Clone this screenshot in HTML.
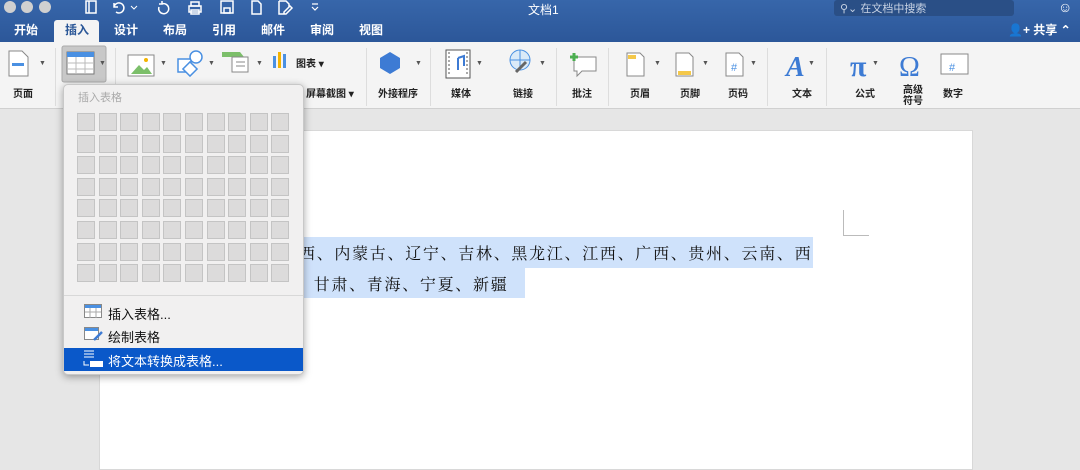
<!DOCTYPE html>
<html><head><meta charset="utf-8">
<style>
*{margin:0;padding:0;box-sizing:border-box}
body{width:1080px;height:464px;overflow:hidden;background:#e6e6e6;font-family:"Liberation Sans","Noto Sans CJK SC",sans-serif;position:relative}
.a{position:absolute}
#top{left:0;top:0;width:1080px;height:42px;background:linear-gradient(#3766aa,#2c5799)}
.tab{position:absolute;top:21px;font-size:12px;color:#fff;font-weight:bold}
#ribbon{left:0;top:42px;width:1080px;height:67px;background:#f4f4f4;border-bottom:1px solid #d0d0d0}
.lbl{position:absolute;font-size:10px;color:#222;text-align:center;font-weight:bold}
.sep{position:absolute;top:48px;width:1px;height:58px;background:#ddd}
.dd{position:absolute;font-size:7px;color:#555}
#page{left:99px;top:130px;width:874px;height:340px;background:#fff;border:1px solid #d8d8d8}
.sel{position:absolute;background:#cfe2fb}
.txt{position:absolute;font-family:"Liberation Serif","Noto Serif CJK SC",serif;font-size:16px;letter-spacing:1.7px;color:#111;white-space:nowrap}
#menu{left:63px;top:84px;width:241px;height:291px;background:#f1f0f0;border-radius:5px;box-shadow:0 2px 8px rgba(0,0,0,.35);border:1px solid #c8c8c8}
.cell{position:absolute;width:18px;height:18px;background:#dcdbdb;border:1px solid #c4c4c4}
.mi{position:absolute;left:44px;font-size:13px;color:#111}
.tl{position:absolute;top:1px;width:12px;height:12px;border-radius:50%;background:#d0d0d0}
</style></head><body>
<div id="top" class="a"></div>
<div class="tl" style="left:4px"></div><div class="tl" style="left:21px"></div><div class="tl" style="left:39px"></div>
<svg class="a" style="left:80px;top:0" width="250" height="16" fill="none" stroke="#fff" stroke-width="1.5">
<rect x="6" y="1" width="10" height="12"/><line x1="9" y1="1" x2="9" y2="13"/>
<path d="M34 7a5 5 0 1 1 2 5M34 3v4h4"/><path d="M51 6l3 3 3-3" stroke-width="1"/>
<path d="M82 4a5 5 0 1 1-3 3M82 1v3h-3"/>
<rect x="109" y="6" width="12" height="6"/><rect x="111" y="2" width="8" height="4"/><rect x="111" y="10" width="8" height="4"/>
<rect x="141" y="1" width="12" height="12"/><rect x="144" y="8" width="6" height="5"/>
<path d="M172 1h6l3 3v10h-9z"/>
<path d="M199 1h7l3 3v3M199 1v13h5M204 12l6-6 2 2-6 6h-2z"/>
<path d="M232 4h6M232 7l3 3 3-3" stroke-width="1.2"/>
</svg>
<div class="a" style="left:528px;top:1px;font-size:12px;color:#fff">文档1</div>
<div class="a" style="left:834px;top:0;width:180px;height:16px;background:#2a4f86;border-radius:3px"></div>
<div class="a" style="left:840px;top:0px;font-size:11px;color:#c8d3e4">⚲⌄ 在文档中搜索</div>
<div class="a" style="left:1058px;top:-1px;font-size:14px;color:#fff">☺</div>
<div class="tab" style="left:14px">开始</div>
<div class="a" style="left:54px;top:20px;width:45px;height:23px;background:#f4f4f4;border-radius:3px 3px 0 0"></div>
<div class="tab" style="left:65px;color:#2b5797">插入</div>
<div class="tab" style="left:114px">设计</div>
<div class="tab" style="left:163px">布局</div>
<div class="tab" style="left:212px">引用</div>
<div class="tab" style="left:261px">邮件</div>
<div class="tab" style="left:310px">审阅</div>
<div class="tab" style="left:359px">视图</div>
<div class="tab" style="left:1008px">👤+ 共享 ⌃</div>
<div id="ribbon" class="a"></div>
<div class="sep" style="left:55px"></div><div class="sep" style="left:115px"></div><div class="sep" style="left:366px"></div><div class="sep" style="left:430px"></div><div class="sep" style="left:556px"></div><div class="sep" style="left:608px"></div><div class="sep" style="left:767px"></div><div class="sep" style="left:826px"></div>
<svg class="a" style="left:0;top:44px" width="1000" height="40">
<path d="M9 7h13l6 6v19H9z" fill="#fff" stroke="#888"/><rect x="12" y="19" width="12" height="3" fill="#4a90e2"/>
<rect x="62" y="2" width="44" height="36" rx="2" fill="#c8c8c8" stroke="#aaa"/>
<rect x="67" y="8" width="27" height="22" fill="#fff" stroke="#777"/><rect x="67" y="8" width="27" height="5" fill="#4a90e2"/>
<path d="M67 19h27M67 25h27M76 13v17M85 13v17" stroke="#bbb"/>
<rect x="128" y="11" width="26" height="21" fill="#fff" stroke="#888"/><path d="M131 30l8-9 5 5 3-3 5 7z" fill="#7cbf6a"/><circle cx="146" cy="16" r="2" fill="#f4b400"/>
<rect x="178" y="15" width="13" height="13" fill="#fff" stroke="#4a90e2" stroke-width="1.5"/><circle cx="196" cy="13" r="6" fill="#fff" stroke="#4a90e2" stroke-width="1.5"/><rect x="185" y="20" width="10" height="10" transform="rotate(45 190 25)" fill="#fff" stroke="#4a90e2" stroke-width="1.5"/>
<path d="M222 8h18l4 5h-22z" fill="#7cbf6a"/><rect x="232" y="13" width="16" height="15" fill="#fff" stroke="#888"/><path d="M236 18h9M236 22h9" stroke="#888"/>
<rect x="273" y="12" width="3" height="12" fill="#4a90e2"/><rect x="278" y="8" width="3" height="16" fill="#f4b400"/><rect x="283" y="10" width="3" height="14" fill="#4a90e2"/>
<path d="M390 8l10 6v10l-10 6-10-6V14z" fill="#3d7bd4"/>
<rect x="446" y="6" width="24" height="28" fill="#fff" stroke="#555"/><path d="M449 8v24M467 8v24" stroke="#555" stroke-dasharray="2 2"/><path d="M458 14v12M458 14l6-2v10" stroke="#3d7bd4" stroke-width="2" fill="none"/>
<circle cx="520" cy="16" r="10" fill="#dbeaf8" stroke="#4a90e2"/><path d="M510 16h20M520 6v20" stroke="#4a90e2"/><path d="M516 28l10-10" stroke="#666" stroke-width="3"/>
<path d="M574 13h22v14h-14l-5 5v-5h-3z" fill="#fff" stroke="#888"/><path d="M574 9v8M570 13h8" stroke="#4caf50" stroke-width="3"/>
<path d="M627 9h13l4 4v19h-17z" fill="#fff" stroke="#888"/><rect x="628" y="11" width="8" height="4" fill="#f4c84a"/>
<path d="M676 9h13l4 4v19h-17z" fill="#fff" stroke="#888"/><rect x="678" y="27" width="13" height="4" fill="#f4c84a"/>
<path d="M726 9h13l4 4v19h-17z" fill="#fff" stroke="#888"/><text x="731" y="27" font-size="11" fill="#4a90e2" font-family="Liberation Sans">#</text>
<text x="786" y="32" font-size="28" font-style="italic" font-weight="bold" fill="#3d7bd4" font-family="Liberation Serif">A</text>
<text x="850" y="32" font-size="30" font-weight="bold" fill="#3d7bd4" font-family="Liberation Serif">π</text>
<text x="899" y="32" font-size="28" fill="#3d7bd4" font-family="Liberation Serif">Ω</text>
<rect x="941" y="10" width="27" height="20" fill="#fff" stroke="#888"/><text x="949" y="27" font-size="11" fill="#4a90e2" font-family="Liberation Sans">#</text>
</svg>
<div class="dd" style="left:39px;top:60px">▼</div><div class="dd" style="left:99px;top:60px">▼</div><div class="dd" style="left:160px;top:60px">▼</div><div class="dd" style="left:208px;top:60px">▼</div><div class="dd" style="left:256px;top:60px">▼</div><div class="dd" style="left:415px;top:60px">▼</div><div class="dd" style="left:476px;top:60px">▼</div><div class="dd" style="left:539px;top:60px">▼</div><div class="dd" style="left:654px;top:60px">▼</div><div class="dd" style="left:702px;top:60px">▼</div><div class="dd" style="left:750px;top:60px">▼</div><div class="dd" style="left:808px;top:60px">▼</div><div class="dd" style="left:872px;top:60px">▼</div>
<div class="lbl" style="left:296px;top:55px">图表 ▾</div>
<div class="lbl" style="left:306px;top:85px">屏幕截图 ▾</div>
<div class="lbl" style="left:13px;top:85px">页面</div>
<div class="lbl" style="left:378px;top:85px">外接程序</div>
<div class="lbl" style="left:451px;top:85px">媒体</div>
<div class="lbl" style="left:513px;top:85px">链接</div>
<div class="lbl" style="left:572px;top:85px">批注</div>
<div class="lbl" style="left:630px;top:85px">页眉</div>
<div class="lbl" style="left:680px;top:85px">页脚</div>
<div class="lbl" style="left:728px;top:85px">页码</div>
<div class="lbl" style="left:792px;top:85px">文本</div>
<div class="lbl" style="left:855px;top:85px">公式</div>
<div class="lbl" style="left:903px;top:85px;line-height:11px">高级<br>符号</div>
<div class="lbl" style="left:943px;top:85px">数字</div>
<div id="page" class="a"></div>
<div class="a" style="left:843px;top:210px;width:1px;height:25px;background:#bbb"></div>
<div class="a" style="left:843px;top:235px;width:26px;height:1px;background:#bbb"></div>
<div class="sel" style="left:297px;top:237px;width:516px;height:31px"></div>
<div class="sel" style="left:297px;top:268px;width:228px;height:30px"></div>
<div class="txt" style="left:299px;top:241px">西、内蒙古、辽宁、吉林、黑龙江、江西、广西、贵州、云南、西</div>
<div class="txt" style="left:296px;top:272px">、甘肃、青海、宁夏、新疆</div>
<div id="menu" class="a">
<div class="a" style="left:14px;top:4px;font-size:11px;color:#aaa">插入表格</div>
<div id="grid"></div>
<div class="a" style="left:0;top:210px;width:239px;height:1px;background:#d8d8d8"></div>
<svg class="a" style="left:20px;top:219px" width="20" height="60"><rect x="0.5" y="0.5" width="17" height="13" fill="#fff" stroke="#888"/><rect x="1" y="1" width="16" height="3" fill="#4a90e2"/><path d="M1 8h16M6 4v10M12 4v10" stroke="#aaa"/>
<rect x="0.5" y="23.5" width="14" height="12" fill="#fff" stroke="#888"/><rect x="1" y="24" width="13" height="3" fill="#4a90e2"/><path d="M10 36l8-8" stroke="#3d7bd4" stroke-width="2.5"/></svg>
<div class="mi" style="top:219px">插入表格...</div>
<div class="mi" style="top:242px">绘制表格</div>
<div class="a" style="left:0;top:263px;width:239px;height:23px;background:#0a58c9"></div>
<svg class="a" style="left:18px;top:264px" width="22" height="20"><path d="M2 2h10M2 5h10M2 8h10" stroke="#fff"/><rect x="8" y="12" width="13" height="6" fill="#fff"/><path d="M2 12v4h5" stroke="#fff" fill="none"/></svg>
<div class="mi" style="top:266px;color:#fff">将文本转换成表格...</div>
</div>
<script>
var g=document.getElementById('grid'),h='';
for(var r=0;r<8;r++)for(var c=0;c<10;c++)h+='<div class="cell" style="left:'+(13+c*21.6)+'px;top:'+(28+r*21.6)+'px"></div>';
g.innerHTML=h;
</script>
</body></html>
